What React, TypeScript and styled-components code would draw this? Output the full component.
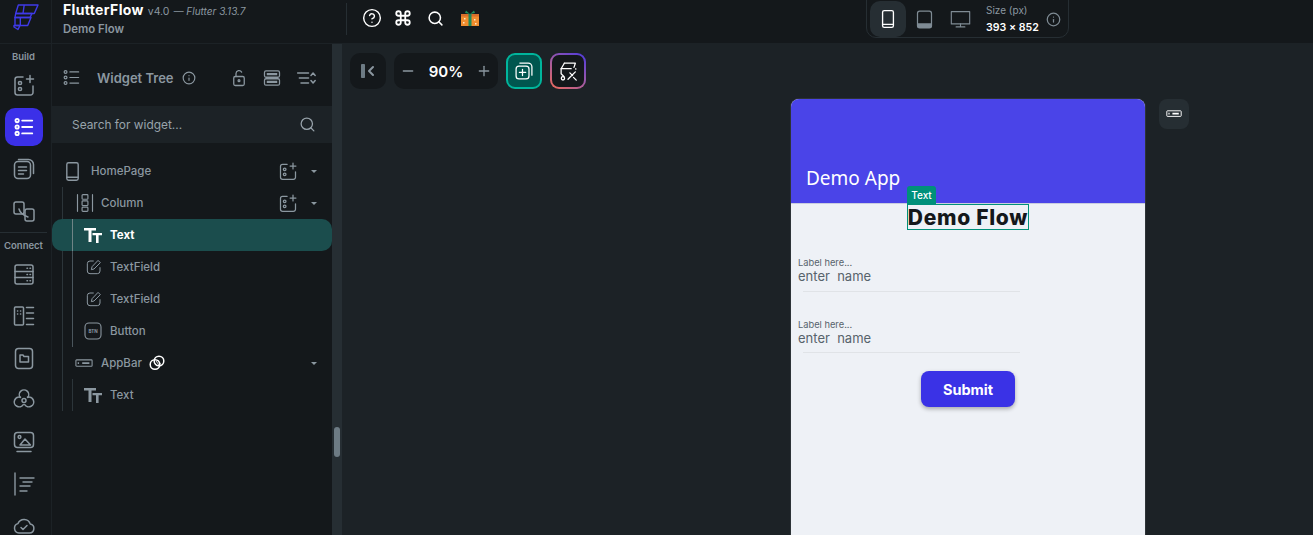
import React from 'react';
import styled, { createGlobalStyle } from 'styled-components';
import { CircleHelp, Command, Info, Minus, Plus, Search } from 'lucide-react';

const GlobalStyle = createGlobalStyle`
  html, body {
    margin: 0;
    padding: 0;
    height: 100%;
    background: #14181b;
    overflow: hidden;
  }
  * { box-sizing: border-box; }
`;

const FONT = `"Inter", "Noto Sans", sans-serif`;

const Page = styled.div`
  width: 1313px;
  height: 535px;
  display: flex;
  flex-direction: column;
  overflow: hidden;
  background: #14181b;
  font-family: ${FONT};
`;

/* top bar */
const TopBar = styled.header`
  height: 44px;
  flex: none;
  display: flex;
  border-bottom: 1px solid #1c2226;
`;

const LogoCell = styled.div`
  width: 52px;
  flex: none;
  display: flex;
  justify-content: center;
  padding-top: 4px;
  border-right: 1px solid #1c2226;
`;

const TitleCell = styled.div`
  width: 294px;
  flex: none;
  padding: 1px 0 0 11px;
`;

const TitleLine = styled.div`
  display: flex;
  align-items: baseline;
  gap: 4px;
  height: 17px;
  white-space: nowrap;
`;

const AppName = styled.span`
  color: #fff;
  font-size: 14px;
  font-weight: 700;
  letter-spacing: 0.35px;
`;

const Version = styled.span`
  color: #8b97a0;
  font-size: 10.5px;
`;

const FlutterVersion = styled.span`
  color: #8b97a0;
  font-size: 10px;
  font-style: italic;
`;

const ProjectName = styled.div`
  color: #8b97a0;
  font-size: 11.4px;
  font-weight: 600;
  margin-top: 4px;
`;

const TopDivider = styled.div`
  width: 1px;
  height: 32px;
  margin-top: 3px;
  background: #262e33;
  flex: none;
`;

const QuickActions = styled.div`
  display: flex;
  align-items: center;
  height: 36px;
  padding-left: 15px;
  width: 519px;
  color: #fff;
  flex: none;
`;

const QuickSlot = styled.div<{ $w: number }>`
  width: ${(p) => p.$w}px;
  display: flex;
`;

const DeviceSwitch = styled.div`
  width: 203px;
  height: 39px;
  margin-top: -1px;
  flex: none;
  display: flex;
  align-items: flex-start;
  padding: 1px 0 0 3px;
  border: 1px solid #262e33;
  border-radius: 0 0 10px 10px;
  color: #7f8b94;
`;

const DeviceButton = styled.div<{ $active?: boolean }>`
  width: 36px;
  height: 36px;
  border-radius: 10px;
  display: flex;
  align-items: center;
  justify-content: center;
  background: ${(p) => (p.$active ? '#262e33' : 'transparent')};
  color: ${(p) => (p.$active ? '#fff' : '#7f8b94')};
`;

const SizeBlock = styled.div`
  margin-left: 8px;
  width: 60px;
  white-space: nowrap;
`;

const SizeLabel = styled.div`
  color: #8b97a0;
  font-size: 10px;
  line-height: 16px;
  margin-top: 1px;
`;

const SizeValue = styled.div`
  color: #fff;
  font-size: 10.6px;
  font-weight: 600;
  line-height: 16px;
  margin-top: 2px;
`;

const SizeInfo = styled.div`
  display: flex;
  height: 36px;
  align-items: center;
`;

/* body */
const Body = styled.div`
  flex: 1;
  min-height: 0;
  display: flex;
`;

const Rail = styled.nav`
  width: 52px;
  flex: none;
  padding-right: 4px;
  border-right: 1px solid #1c2226;
  color: #8b97a0;
`;

const RailLabel = styled.div`
  font-size: 9.5px;
  font-weight: 600;
  color: #8b97a0;
  text-align: center;
  line-height: 14px;
  padding-top: 6px;
  box-sizing: content-box;
  height: 14px;
`;

const RailDivider = styled.div`
  height: 1px;
  background: #262e33;
`;

const RailItem = styled.div<{ $active?: boolean }>`
  height: 42px;
  display: flex;
  align-items: center;
  justify-content: center;
  & > span {
    width: 38px;
    height: 38px;
    display: flex;
    align-items: center;
    justify-content: center;
    border-radius: 10px;
    background: ${(p) => (p.$active ? '#3b30e8' : 'transparent')};
    color: ${(p) => (p.$active ? '#fff' : '#8b97a0')};
  }
`;

/* widget tree */
const Panel = styled.aside`
  width: 280px;
  flex: none;
  display: flex;
  flex-direction: column;
  color: #8b97a0;
`;

const PanelHeader = styled.div`
  height: 62px;
  flex: none;
  display: flex;
  align-items: center;
  padding: 5px 0 0 10px;
`;

const PanelTitle = styled.div`
  font-size: 13px;
  font-weight: 600;
  color: #8b97a0;
  margin: 0 8px 0 16px;
  white-space: nowrap;
`;

const HeaderIcons = styled.div`
  display: flex;
  align-items: center;
  margin-left: 34px;
  gap: 15px;
`;

const SearchBar = styled.div`
  height: 37px;
  flex: none;
  display: flex;
  align-items: center;
  justify-content: space-between;
  padding: 0 16px 0 20px;
  background: #1c2226;
  font-size: 11.9px;
  color: #98a3ab;
`;

const Tree = styled.div`
  padding-top: 12px;
  font-size: 11.5px;
`;

const Row = styled.div<{ $pad: number; $active?: boolean }>`
  position: relative;
  height: 32px;
  display: flex;
  align-items: center;
  padding-left: ${(p) => p.$pad}px;
  border-radius: ${(p) => (p.$active ? '10px' : '0')};
  background: ${(p) => (p.$active ? '#1b4d4d' : 'transparent')};
  color: ${(p) => (p.$active ? '#fff' : '#8b97a0')};
  font-weight: ${(p) => (p.$active ? 700 : 500)};
  ${(p) =>
    p.$active
      ? `
    margin-left: -21px;
    &::before {
      content: '';
      position: absolute;
      left: 20px;
      top: 0;
      bottom: 0;
      width: 1px;
      background: #6f8486;
    }
  `
      : ''}
`;

const RowIcon = styled.span<{ $w: number; $gap?: number }>`
  width: ${(p) => p.$w}px;
  margin-left: ${(p) => p.$gap ?? 0}px;
  flex: none;
  display: flex;
  align-items: center;
`;

const RowEnd = styled.div`
  margin-left: auto;
  display: flex;
  align-items: center;
  gap: 13px;
  padding-right: 15px;
`;

const Guide = styled.div<{ $offset: number; $color: string }>`
  margin-left: ${(p) => p.$offset}px;
  border-left: 1px solid ${(p) => p.$color};
`;

const Caret = styled.span`
  width: 0;
  height: 0;
  border-left: 3px solid transparent;
  border-right: 3px solid transparent;
  border-top: 3px solid #8b97a0;
`;

const Track = styled.div`
  width: 10px;
  flex: none;
  background: #262e33;
  padding: 383px 2px 0 2px;
`;

const Thumb = styled.div`
  height: 30px;
  border-radius: 3px;
  background: #6d7b84;
`;

/* canvas */
const Canvas = styled.main`
  flex: 1;
  min-width: 0;
  background: #1c2226;
  padding: 9px 0 0 8px;
`;

const CanvasTools = styled.div`
  display: flex;
  gap: 8px;
  height: 36px;
`;

const ToolBox = styled.div`
  height: 36px;
  min-width: 36px;
  border-radius: 10px;
  background: #14181b;
  display: flex;
  align-items: center;
  justify-content: center;
  color: #8b97a0;
`;

const ZoomBox = styled(ToolBox)`
  width: 104px;
  justify-content: space-between;
  padding: 0 6px;
`;

const ZoomValue = styled.span`
  color: #fff;
  font-size: 15px;
  font-weight: 600;
`;

const TealButton = styled.div`
  width: 36px;
  height: 36px;
  border: 2px solid #00b59c;
  border-radius: 9px;
  background: #00564f;
  color: #fff;
  display: flex;
  align-items: center;
  justify-content: center;
`;

const GradientButton = styled.div`
  width: 36px;
  height: 36px;
  border-radius: 9px;
  padding: 2px;
  background: linear-gradient(35deg, #ee6a57, #a05aa6 50%, #4b39e0);
  & > div {
    width: 100%;
    height: 100%;
    border-radius: 7px;
    background: #14181b;
    color: #fff;
    display: flex;
    align-items: center;
    justify-content: center;
  }
`;

const Stage = styled.div`
  display: flex;
  align-items: flex-start;
  gap: 14px;
  margin: 10px 0 0 441px;
`;

const Phone = styled.div`
  width: 354px;
  height: 452px;
  flex: none;
  background: #eef1f6;
  border-radius: 8px 8px 0 0;
  box-shadow: 0 0 0 1px rgba(255, 255, 255, 0.08);
  display: flex;
  flex-direction: column;
  align-items: center;
`;

const AppBarView = styled.div`
  align-self: stretch;
  height: 105px;
  flex: none;
  background: #4a44e8;
  border-radius: 8px 8px 0 0;
  border-bottom: 1px solid #c9cde0;
  display: flex;
  align-items: flex-end;
  padding: 0 0 12px 15px;
  color: #fff;
  font-size: 19px;
  font-family: "Noto Sans", sans-serif;
  line-height: 26px;
`;

const Selected = styled.div`
  position: relative;
  width: 122px;
  height: 26px;
  border: 1px solid #00907a;
  display: flex;
  align-items: center;
  justify-content: center;
  color: #14181b;
  font-size: 21px;
  font-weight: 800;
  letter-spacing: 0.7px;
  white-space: nowrap;
  flex: none;
`;

const SelectedTag = styled.span`
  position: absolute;
  left: -1px;
  top: -19px;
  width: 29px;
  height: 18px;
  background: #00907a;
  border-radius: 3px 3px 0 0;
  color: #fff;
  font-size: 10px;
  font-weight: 500;
  letter-spacing: 0;
  display: flex;
  align-items: center;
  justify-content: center;
`;

const Field = styled.div<{ $top: number }>`
  align-self: flex-start;
  width: 222px;
  margin: ${(p) => p.$top}px 0 0 7px;
`;

const FieldLabel = styled.div`
  color: #57636c;
  font-size: 9.3px;
  line-height: 11px;
`;

const FieldValue = styled.div`
  color: #57636c;
  font-size: 13px;
  line-height: 16px;
  white-space: pre;
`;

const FieldLine = styled.div<{ $gap: number }>`
  height: 1px;
  background: #e0e3e7;
  margin: ${(p) => p.$gap}px 0 0 5px;
`;

const Submit = styled.div`
  width: 94px;
  height: 36px;
  margin-top: 18px;
  flex: none;
  border-radius: 8px;
  background: #3a32e6;
  color: #fff;
  font-size: 14.5px;
  font-weight: 700;
  display: flex;
  align-items: center;
  justify-content: center;
  box-shadow: 0 2px 4px rgba(0, 0, 0, 0.3);
`;

const SideButton = styled.div`
  width: 30px;
  height: 30px;
  flex: none;
  border-radius: 8px;
  background: #262e33;
  color: #fff;
  display: flex;
  align-items: center;
  justify-content: center;
`;

/* icons */
const Svg = ({ size = 24, sw = 1.6, children }: { size?: number; sw?: number; children: React.ReactNode }) => (
  <svg width={size} height={size} viewBox="0 0 24 24" fill="none" stroke="currentColor" strokeWidth={sw} strokeLinecap="round" strokeLinejoin="round">
    {children}
  </svg>
);

const Logo = () => (
  <svg width="26" height="27" viewBox="13 4.5 26 27" fill="none" stroke="#3f3ae8" strokeWidth="1.4" strokeLinejoin="round">
    <path d="M18.3 5.5H38l-3.7 8.5H15.7zM24.2 5.5L23 14" />
    <path d="M15.7 14H32l-2 4H15z" />
    <path d="M15 18h16l-3.3 8H15zM20.3 18v8" />
    <path d="M14 26h6l-2 4-4-2.5z" />
  </svg>
);

const AddWidgetIcon = ({ size = 24 }: { size?: number }) => (
  <Svg size={size} sw={1.5}>
    <path d="M11 4H5.5A2.5 2.5 0 0 0 3 6.5v13A2.5 2.5 0 0 0 5.5 22h13a2.5 2.5 0 0 0 2.5-2.5V13" />
    <circle cx="8" cy="10" r="1.6" />
    <circle cx="8" cy="16" r="1.6" />
    <path d="M18 2.5v7M14.5 6h7" />
  </Svg>
);

const TreeIcon = ({ size = 24, sw = 1.8 }: { size?: number; sw?: number }) => (
  <Svg size={size} sw={sw}>
    <circle cx="4.5" cy="5" r="1.8" />
    <circle cx="4.5" cy="12" r="1.8" />
    <circle cx="4.5" cy="19" r="1.8" />
    <path d="M10 5h11M10 12h11M10 19h11" />
  </Svg>
);

const PagesIcon = () => (
  <Svg sw={1.5}>
    <rect x="2.5" y="4.5" width="16" height="17" rx="3.5" />
    <path d="M6.5 2.5h10a5 5 0 0 1 5 5v9" />
    <path d="M6.5 10h8M6.5 13.5h8M6.5 17h5" />
  </Svg>
);

const LinkScreensIcon = () => (
  <Svg sw={1.5}>
    <rect x="2" y="3" width="10" height="12" rx="2" />
    <rect x="13" y="10" width="9" height="12" rx="2" />
    <path d="M7 10c1 4 4 6 9 8" />
  </Svg>
);

const ServerIcon = () => (
  <Svg sw={1.5}>
    <rect x="3" y="3" width="18" height="19" rx="2" />
    <path d="M3 9.5h18M3 15.5h18M15 6.3h.5M18 6.3h.5M15 12.5h.5M18 12.5h.5M15 18.8h.5M18 18.8h.5" />
  </Svg>
);

const DataIcon = () => (
  <Svg sw={1.5}>
    <rect x="2.5" y="3" width="9" height="18" rx="1" />
    <path d="M5.5 7h.2M8.5 7h.2M5.5 10h.2M8.5 10h.2M14.5 3.5h7M14.5 9h7M14.5 14.5h7M14.5 20.5h7" />
  </Svg>
);

const FolderScreenIcon = () => (
  <Svg sw={1.5}>
    <rect x="3.5" y="2.5" width="17" height="20" rx="3" />
    <path d="M8 9h3l1 1.5h4.5V16H8z" />
  </Svg>
);

const ClusterIcon = () => (
  <Svg sw={1.5}>
    <path d="M8.3 9.5a4.7 4.7 0 1 1 7.4 0" />
    <path d="M8.5 9.2a4.9 4.9 0 1 0 2.8 7.4" />
    <path d="M15.5 9.2a4.9 4.9 0 1 1-2.8 7.4" />
    <circle cx="12" cy="12.5" r="2" />
  </Svg>
);

const MediaIcon = () => (
  <Svg sw={1.5}>
    <rect x="2.5" y="2.5" width="19" height="15" rx="3" />
    <circle cx="7.5" cy="7" r="1.4" />
    <path d="M8 15l5-6 5.5 6zM5 21.5h14" />
  </Svg>
);

const AlignIcon = () => (
  <Svg sw={1.4}>
    <path d="M3 1v22M8 6h14M11 10h9M8 14h10M8 19h7" />
  </Svg>
);

const CloudCheckIcon = () => (
  <Svg sw={1.5}>
    <path d="M7 19h10.5a4.5 4.5 0 0 0 .8-8.9A6.5 6.5 0 0 0 6 9.6 4.8 4.8 0 0 0 7 19z" />
    <path d="M9 13.5l2 2 4-4" />
  </Svg>
);

const LockIcon = () => (
  <Svg size={18} sw={1.7}>
    <rect x="5" y="10" width="14" height="12" rx="2" />
    <path d="M8 10V6a4 4 0 0 1 7.5-1.8" />
    <circle cx="12" cy="15.5" r="1.2" />
  </Svg>
);

const RowsIcon = () => (
  <Svg size={18} sw={1.7}>
    <rect x="2" y="2.5" width="20" height="8.5" rx="2" />
    <rect x="2" y="13" width="20" height="8.5" rx="2" />
    <path d="M5 6.7h14M5 17.3h14" strokeWidth={3} strokeLinecap="butt" />
  </Svg>
);

const SortIcon = () => (
  <Svg size={20} sw={1.8}>
    <path d="M2 6h13M4 12h11M6 18h9M18 9l2.5-3L23 9M18 15l2.5 3 2.5-3" />
  </Svg>
);

const PhoneIcon = ({ size = 22 }: { size?: number }) => (
  <Svg size={size} sw={1.6}>
    <rect x="5.5" y="2" width="13" height="20" rx="2" />
    <path d="M5.5 18.5h13" />
  </Svg>
);

const ColumnIcon = () => (
  <Svg size={20} sw={1.4}>
    <path d="M3 2v20M21 2v20" />
    <rect x="8.5" y="2" width="7" height="5.5" rx="1" />
    <rect x="8.5" y="9.5" width="7" height="5.5" rx="1" />
    <rect x="8.5" y="17" width="7" height="5" rx="1" />
  </Svg>
);

const TextIcon = () => (
  <svg width="18" height="15" viewBox="0 0 18 15" fill="currentColor">
    <path d="M0 0h12v2.6H7.5V14H4.5V2.6H0zM8.5 5H18v2.2h-3.4V15h-2.6V7.2H8.5z" />
  </svg>
);

const EditIcon = () => (
  <Svg size={16} sw={1.5}>
    <path d="M11 3H6a4 4 0 0 0-4 4v11a4 4 0 0 0 4 4h11a4 4 0 0 0 4-4v-5" />
    <path d="M18.5 2.5l3 3L12 15l-4 1 1-4z" />
  </Svg>
);

const ButtonIcon = () => (
  <svg width="18" height="18" viewBox="0 0 18 18" fill="none" stroke="currentColor" strokeWidth="1.1">
    <rect x="1" y="1" width="16" height="16" rx="4" />
    <text x="9" y="11" textAnchor="middle" fontSize="4.5" fontWeight="700" fill="currentColor" stroke="none" fontFamily="Inter, sans-serif">BTN</text>
  </svg>
);

const AppBarIcon = ({ w = 18 }: { w?: number }) => (
  <svg width={w} height={w * 0.45} viewBox="0 0 20 9" fill="none" stroke="currentColor" strokeWidth="1.2">
    <rect x="1" y="1" width="18" height="7" rx="0.8" />
    <path d="M3 4.5h1.5M8 4.5h8" strokeWidth="2" />
  </svg>
);

const LinkedRings = () => (
  <svg width="16" height="16" viewBox="0 0 16 16" fill="none" stroke="#fff" strokeWidth="1.5">
    <circle cx="6" cy="9.5" r="4.8" />
    <circle cx="10" cy="6" r="4.8" />
    <path d="M7 6l3 4M8.5 5l3 4M5 7l3 4" strokeWidth="0.8" />
  </svg>
);

const GiftIcon = () => (
  <svg width="18" height="16" viewBox="0 0 18 16">
    <rect x="0" y="4" width="18" height="12" fill="#f08c2e" />
    <rect x="0" y="4" width="18" height="2.5" fill="#d96f2a" />
    <rect x="7.5" y="4" width="3" height="12" fill="#1f8a5a" />
    <path d="M9 4L5 0.5 4 3zM9 4l4-3.5L14 3z" fill="#1f8a5a" />
    <rect x="3" y="8" width="1.5" height="1.5" fill="#fde7c3" />
    <rect x="13" y="9" width="1.5" height="1.5" fill="#fde7c3" />
    <rect x="2" y="12" width="1.5" height="1.5" fill="#fde7c3" />
    <rect x="14" y="13" width="1.5" height="1.5" fill="#fde7c3" />
  </svg>
);

const CollapseIcon = () => (
  <svg width="20" height="20" viewBox="0 0 20 20" fill="none">
    <rect x="3" y="3" width="4" height="14" rx="0.8" fill="#6d7b84" />
    <path d="M15 6l-4 4 4 4" stroke="#8b97a0" strokeWidth="2" strokeLinecap="round" strokeLinejoin="round" />
  </svg>
);

const StackPlusIcon = () => (
  <Svg size={20} sw={1.5}>
    <rect x="2.5" y="6" width="15.5" height="15.5" rx="3.5" />
    <path d="M7 2.5h10A4.5 4.5 0 0 1 21.5 7v10" />
    <path d="M10.2 10v7.5M6.5 13.7H14" />
  </Svg>
);

const MagicIcon = () => (
  <Svg size={22} sw={1.4}>
    <path d="M8 3.5h12l-1.5 4.5" />
    <path d="M8 3.5L4.5 9.5h11" />
    <path d="M4.5 9.5v5.5l3 3" />
    <circle cx="6.5" cy="20" r="1.8" />
    <path d="M12 21l8-8M14 14l3 3M18 19l3 3M20.5 9.5v.5" />
  </Svg>
);

const TabletIcon = () => (
  <Svg size={21} sw={1.4}>
    <rect x="4" y="2.5" width="16" height="19" rx="2.5" />
    <path d="M4.5 17h15v3a1 1 0 0 1-1 1h-13a1 1 0 0 1-1-1z" fill="currentColor" />
  </Svg>
);

const DesktopIcon = () => (
  <Svg size={21} sw={1.3}>
    <rect x="1.5" y="3" width="21" height="14" />
    <path d="M12 17v3M7 20.5h10" />
  </Svg>
);

const App = () => {
  return (
    <Page>
      <GlobalStyle />
      <TopBar>
        <LogoCell>
          <Logo />
        </LogoCell>
        <TitleCell>
          <TitleLine>
            <AppName>FlutterFlow</AppName>
            <Version>v4.0</Version>
            <FlutterVersion>— Flutter 3.13.7</FlutterVersion>
          </TitleLine>
          <ProjectName>Demo Flow</ProjectName>
        </TitleCell>
        <TopDivider />
        <QuickActions>
          <QuickSlot $w={32}><CircleHelp size={20} strokeWidth={1.7} /></QuickSlot>
          <QuickSlot $w={33}><Command size={18} strokeWidth={2.4} /></QuickSlot>
          <QuickSlot $w={34}><Search size={17} strokeWidth={2.2} /></QuickSlot>
          <QuickSlot $w={30}><GiftIcon /></QuickSlot>
        </QuickActions>
        <DeviceSwitch>
          <DeviceButton $active><PhoneIcon size={20} /></DeviceButton>
          <DeviceButton><TabletIcon /></DeviceButton>
          <DeviceButton><DesktopIcon /></DeviceButton>
          <SizeBlock>
            <SizeLabel>Size (px)</SizeLabel>
            <SizeValue>393 × 852</SizeValue>
          </SizeBlock>
          <SizeInfo><Info size={15} /></SizeInfo>
        </DeviceSwitch>
      </TopBar>

      <Body>
        <Rail>
          <RailLabel>Build</RailLabel>
          <RailItem><span><AddWidgetIcon /></span></RailItem>
          <RailItem $active><span><TreeIcon size={22} sw={2} /></span></RailItem>
          <RailItem><span><PagesIcon /></span></RailItem>
          <RailItem><span><LinkScreensIcon /></span></RailItem>
          <RailDivider />
          <RailLabel>Connect</RailLabel>
          <RailItem><span><ServerIcon /></span></RailItem>
          <RailItem><span><DataIcon /></span></RailItem>
          <RailItem><span><FolderScreenIcon /></span></RailItem>
          <RailItem><span><ClusterIcon /></span></RailItem>
          <RailItem><span><MediaIcon /></span></RailItem>
          <RailItem><span><AlignIcon /></span></RailItem>
          <RailItem><span><CloudCheckIcon /></span></RailItem>
        </Rail>

        <Panel>
          <PanelHeader>
            <TreeIcon size={19} sw={1.5} />
            <PanelTitle>Widget Tree</PanelTitle>
            <Info size={14} />
            <HeaderIcons>
              <LockIcon />
              <RowsIcon />
              <SortIcon />
            </HeaderIcons>
          </PanelHeader>
          <SearchBar>
            Search for widget...
            <Search size={17} strokeWidth={1.8} />
          </SearchBar>
          <Tree>
            <Row $pad={10}>
              <RowIcon $w={29}><PhoneIcon size={21} /></RowIcon>
              HomePage
              <RowEnd><AddWidgetIcon size={20} /><Caret /></RowEnd>
            </Row>
            <Guide $offset={10} $color="#2c353a">
              <Row $pad={12}>
                <RowIcon $w={26}><ColumnIcon /></RowIcon>
                Column
                <RowEnd><AddWidgetIcon size={20} /><Caret /></RowEnd>
              </Row>
              <Guide $offset={9} $color="#4a555c">
                <Row $pad={32} $active>
                  <RowIcon $w={26}><TextIcon /></RowIcon>
                  Text
                </Row>
                <Row $pad={13}>
                  <RowIcon $w={24}><EditIcon /></RowIcon>
                  TextField
                </Row>
                <Row $pad={13}>
                  <RowIcon $w={24}><EditIcon /></RowIcon>
                  TextField
                </Row>
                <Row $pad={11}>
                  <RowIcon $w={26}><ButtonIcon /></RowIcon>
                  Button
                </Row>
              </Guide>
              <Row $pad={12}>
                <RowIcon $w={26}><AppBarIcon /></RowIcon>
                AppBar
                <RowIcon $w={16} $gap={7}><LinkedRings /></RowIcon>
                <RowEnd><Caret /></RowEnd>
              </Row>
              <Guide $offset={9} $color="#2c353a">
                <Row $pad={11}>
                  <RowIcon $w={26}><TextIcon /></RowIcon>
                  Text
                </Row>
              </Guide>
            </Guide>
          </Tree>
        </Panel>
        <Track><Thumb /></Track>

        <Canvas>
          <CanvasTools>
            <ToolBox><CollapseIcon /></ToolBox>
            <ZoomBox>
              <Minus size={16} strokeWidth={2} />
              <ZoomValue>90%</ZoomValue>
              <Plus size={16} strokeWidth={2} />
            </ZoomBox>
            <TealButton><StackPlusIcon /></TealButton>
            <GradientButton><div><MagicIcon /></div></GradientButton>
          </CanvasTools>
          <Stage>
            <Phone>
              <AppBarView>Demo App</AppBarView>
              <Selected>
                <SelectedTag>Text</SelectedTag>
                Demo Flow
              </Selected>
              <Field $top={27}>
                <FieldLabel>Label here...</FieldLabel>
                <FieldValue>enter  name</FieldValue>
                <FieldLine $gap={7} />
              </Field>
              <Field $top={27}>
                <FieldLabel>Label here...</FieldLabel>
                <FieldValue>enter  name</FieldValue>
                <FieldLine $gap={6} />
              </Field>
              <Submit>Submit</Submit>
            </Phone>
            <SideButton><AppBarIcon w={16} /></SideButton>
          </Stage>
        </Canvas>
      </Body>
    </Page>
  );
};

export default App;
